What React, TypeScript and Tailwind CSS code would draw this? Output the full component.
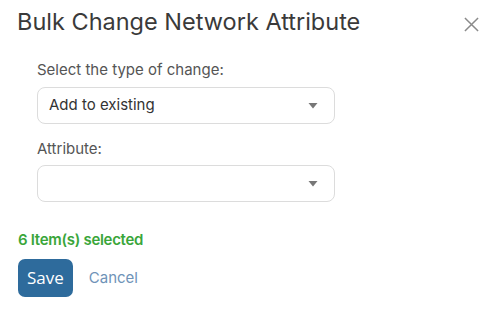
import React from 'react';

const Caret = () => (
  <svg width="10" height="6" viewBox="0 0 10 6" className="text-[#777]">
    <path d="M0.5 0h9L5 5.5z" fill="currentColor" />
  </svg>
);

const SelectBox = ({ value }: { value?: string }) => (
  <div className="flex h-[37px] w-[298px] items-center justify-between rounded-[8px] border border-[#dcdcdc] bg-white pl-[11px] pr-[16px]">
    <span className="text-[15px] text-[#333]">{value}</span>
    <Caret />
  </div>
);

export default function App() {
  return (
    <div className="h-[320px] w-[490px] bg-white font-['Inter',sans-serif]">
      {/* Header */}
      <div className="flex items-start justify-between pl-[17px] pr-[7px] pt-[6px]">
        <h1 className="text-[23.5px] font-normal leading-[32px] text-[#3a3a3a]">
          Bulk Change Network Attribute
        </h1>
        <button className="mt-[7px] p-1 text-[#8a8a8a]">
          <svg width="15" height="15" viewBox="0 0 16 16">
            <path d="M1 1l14 14M15 1L1 15" stroke="currentColor" strokeWidth="1.6" />
          </svg>
        </button>
      </div>

      {/* Form */}
      <div className="flex flex-col pl-[37px] pt-[22px]">
        <label className="text-[15px] leading-[20px] text-[#555]">Select the type of change:</label>
        <div className="mt-[7px]">
          <SelectBox value="Add to existing" />
        </div>
        <label className="mt-[15px] text-[15px] leading-[20px] text-[#555]">Attribute:</label>
        <div className="mt-[6px]">
          <SelectBox />
        </div>
      </div>

      {/* Footer */}
      <div className="pl-[18px] pt-[29px]">
        <p className="text-[15px] font-semibold leading-[18px] tracking-[-0.3px] text-[#3aa63a]">6 Item(s) selected</p>
        <div className="mt-[10px] flex items-center gap-[16px]">
          <button className="h-[38px] rounded-[7px] bg-[#2e6b9c] px-[9px] font-['Open_Sans',sans-serif] text-[17px] text-white">
            Save
          </button>
          <button className="text-[15px] text-[#6f93b8]">Cancel</button>
        </div>
      </div>
    </div>
  );
}
